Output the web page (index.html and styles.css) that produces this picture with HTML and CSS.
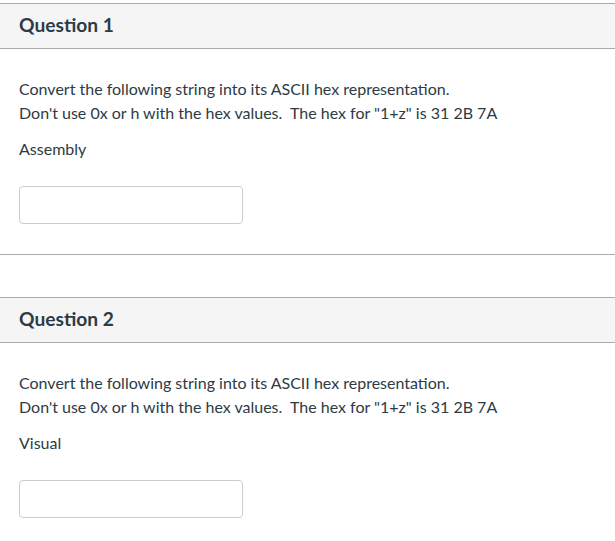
FILE: index.html
```html
<!DOCTYPE html>
<html>
<head>
<meta charset="utf-8">
<link rel="stylesheet" href="styles.css">
</head>
<body>
<div class="quiz">
  <div class="question">
    <div class="q-header">Question 1</div>
    <div class="q-body">
      <div class="q-text">
        <p>Convert the following string into its ASCII hex representation.<br>Don't use 0x or h with the hex values.&nbsp; The hex for "1+z" is 31 2B 7A</p>
        <p>Assembly</p>
      </div>
      <input class="answer" type="text">
    </div>
  </div>
  <div class="question">
    <div class="q-header">Question 2</div>
    <div class="q-body">
      <div class="q-text">
        <p>Convert the following string into its ASCII hex representation.<br>Don't use 0x or h with the hex values.&nbsp; The hex for "1+z" is 31 2B 7A</p>
        <p>Visual</p>
      </div>
      <input class="answer" type="text">
    </div>
  </div>
</div>
</body>
</html>
```
FILE: styles.css
```css
html, body {
  margin: 0;
  padding: 0;
  background: #fff;
}
body {
  font-family: Lato, "Open Sans", sans-serif;
  color: #2d3b45;
  padding-top: 3px;
}
.quiz {
  display: flex;
  flex-direction: column;
  gap: 42px;
}
.question {
  border-top: 1px solid #aaaaaa;
  border-bottom: 1px solid #aaaaaa;
}
.q-header {
  background: #f5f5f5;
  border-bottom: 1px solid #aaaaaa;
  height: 40px;
  padding: 0 0 4px 19px;
  display: flex;
  align-items: center;
  font-size: 19.2px;
  font-weight: 700;
}
.q-body {
  padding: 28px 19px 30px;
}
.q-text p {
  margin: 0 0 12px;
  font-size: 16px;
  line-height: 24px;
}
.answer {
  display: block;
  box-sizing: border-box;
  margin-top: 25px;
  width: 224px;
  height: 38px;
  border: 1px solid #c7cdd1;
  border-radius: 4px;
  background: #fff;
  padding: 0 8px;
  font-family: Lato, sans-serif;
  font-size: 14px;
}
```
